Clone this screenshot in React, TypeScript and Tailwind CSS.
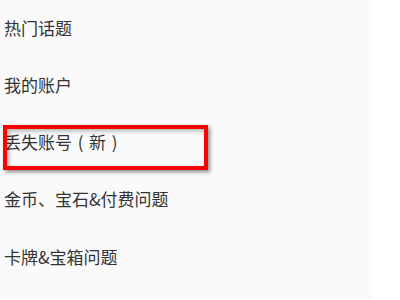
import React from "react";

const P = ({ c }: { c: string }) => <span className="inline-block w-[17px] text-center">{c}</span>;

const items: React.ReactNode[] = [
  "热门话题",
  "我的账户",
  <>丢失账号<P c="(" />新<P c=")" /></>,
  "金币、宝石&付费问题",
  "卡牌&宝箱问题",
];

export default function App() {
  return (
    <div className="relative w-[400px] h-[300px] overflow-hidden bg-white flex" style={{ fontFamily: '"Noto Sans CJK SC", "Noto Sans", sans-serif' }}>
      <div className="w-[372px] h-full bg-[#fafafa] flex flex-col mt-[-1.5px]">
        {items.map((t, i) => (
          <div key={i} className="h-[57.25px] shrink-0 flex items-center pl-[4px] text-[17px] text-[#333333] leading-none">
            {t}
          </div>
        ))}
      </div>
      <div className="absolute left-[3px] top-[125px] w-[205px] h-[45px] border-[4px] border-[#ff0000] shadow-[2px_2px_4px_rgba(0,0,0,0.45),inset_2px_2px_4px_rgba(0,0,0,0.3)]" />
    </div>
  );
}
